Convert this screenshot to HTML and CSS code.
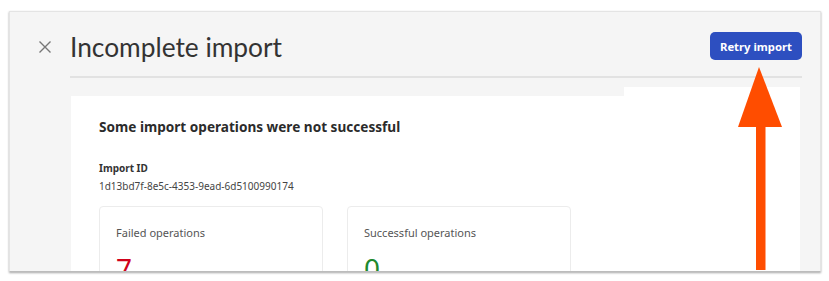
FILE: index.html
```html
<!DOCTYPE html>
<html>
<head>
<meta charset="utf-8">
<link rel="stylesheet" href="styles.css">
</head>
<body>
<div class="window">
  <div class="header">
    <div class="close-col">
      <svg class="close" width="14" height="14" viewBox="0 0 14 14"><path d="M1.5 1.5 L12.5 12.5 M12.5 1.5 L1.5 12.5" stroke="#777" stroke-width="1.4" fill="none"/></svg>
    </div>
    <div class="main">
      <div class="title-row">
        <h1 class="title">Incomplete import</h1>
        <button class="retry">Retry import</button>
      </div>
      <div class="divider"></div>
      <div class="card-wrap">
        <div class="card">
          <h2 class="heading">Some import operations were not successful</h2>
          <div class="label">Import ID</div>
          <div class="value">1d13bd7f-8e5c-4353-9ead-6d5100990174</div>
          <div class="stats">
            <div class="stat">
              <div class="stat-label">Failed operations</div>
              <div class="stat-num"><span class="num fail">7</span><span class="unit">in</span></div>
            </div>
            <div class="stat">
              <div class="stat-label">Successful operations</div>
              <div class="stat-num"><span class="num ok">0</span><span class="unit">in</span></div>
            </div>
          </div>
        </div>
      </div>
    </div>
  </div>
</div>
<svg class="arrow" width="50" height="210" viewBox="0 0 50 210">
  <polygon points="21,0 0,60 44,60" fill="#ff4d00"/>
  <rect x="18" y="58" width="9.5" height="145" fill="#ff4d00"/>
</svg>
</body>
</html>
```
FILE: styles.css
```css
html, body {
  margin: 0;
  padding: 0;
  background: #ffffff;
}
body {
  width: 829px;
  height: 281px;
  overflow: hidden;
  position: relative;
  font-family: "Noto Sans", "Open Sans", sans-serif;
}
.window {
  margin: 11px 0 0 9px;
  width: 812px;
  height: 261px;
  background: #f5f5f5;
  border: 1px solid #e4e4e4;
  border-bottom-color: #bcbcbc;
  box-sizing: border-box;
  box-shadow: 0 1px 2px rgba(0,0,0,0.35);
  overflow: hidden;
}
.header {
  display: flex;
  padding-top: 20px;
}
.close-col {
  width: 60px;
  flex: none;
  padding-left: 28px;
  box-sizing: border-box;
  padding-top: 8px;
}
.close { display: block; }
.main {
  flex: 1;
  margin-right: 18px;
}
.title-row {
  display: flex;
  justify-content: space-between;
  align-items: flex-start;
  height: 44px;
}
.title {
  margin: 0;
  font-family: "Lato", sans-serif;
  font-weight: 400;
  font-size: 26.3px;
  line-height: 30px;
  color: #333;
}
.retry {
  margin-top: 0;
  height: 28px;
  width: 92px;
  border: none;
  border-radius: 5px;
  background: #2d4fc0;
  color: #fff;
  font-family: "Noto Sans", sans-serif;
  font-weight: 700;
  font-size: 11.3px;
  padding: 0;
}
.divider {
  height: 2px;
  background: #e2e2e2;
}
.card-wrap {
  padding-top: 18px;
  padding-right: 2px;
}
.card {
  position: relative;
  background: #fff;
  margin-left: 1px;
  padding: 21px 28px 0 28px;
  height: 200px;
}
.card::before {
  content: "";
  position: absolute;
  right: 0;
  top: -9px;
  width: 176px;
  height: 9px;
  background: #fff;
}
.heading {
  margin: 0;
  font-size: 13.6px;
  font-weight: 700;
  color: #2b2b2b;
  line-height: 20px;
}
.label {
  margin-top: 24px;
  font-size: 10px;
  font-weight: 700;
  color: #333;
  line-height: 14px;
}
.value {
  margin-top: 4px;
  font-size: 10px;
  color: #444;
  line-height: 14px;
}
.stats {
  display: flex;
  gap: 24px;
  margin-top: 13px;
}
.stat {
  width: 224px;
  height: 100px;
  border: 1px solid #ececec;
  border-radius: 4px;
  box-sizing: border-box;
  padding: 18px 16px 0 16px;
}
.stat-label {
  font-size: 11px;
  color: #555;
  line-height: 16px;
}
.stat-num {
  margin-top: 11px;
  display: flex;
  align-items: baseline;
  gap: 4px;
}
.num {
  font-size: 28px;
  line-height: 32px;
  font-weight: 400;
}
.fail { color: #d0021b; }
.ok { color: #1e8a2e; }
.unit {
  font-size: 9px;
  color: #666;
}
.arrow {
  position: absolute;
  left: 738px;
  top: 67px;
}
```
